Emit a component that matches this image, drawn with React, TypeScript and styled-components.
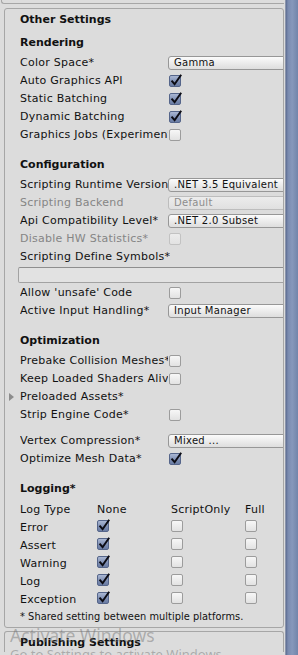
import React from "react";
import styled, { createGlobalStyle, css } from "styled-components";

const GlobalStyle = createGlobalStyle`
  html, body { margin: 0; padding: 0; background: #dcdcdc; overflow: hidden; }
  body { font-family: "DejaVu Sans", Verdana, sans-serif; font-size: 11px; color: #111; }
`;

const Page = styled.div`
  position: relative;
  display: flex;
  width: 298px;
  height: 655px;
  overflow: hidden;
  background: #dcdcdc;
`;

const Main = styled.div`
  flex: none;
  width: 285px;
  display: flex;
  flex-direction: column;
`;

const ScrollBar = styled.div`
  flex: 1;
  background: linear-gradient(to right, #b9bdc6 0, #5d6d92 1px, #7a8bb0 3px, #8798bb 55%, #7285aa 100%);
`;

const PrevBoxEdge = styled.div`
  flex: none;
  height: 3px;
  margin: 0 1px 0 1px;
  border-left: 1px solid #a6a6a6;
  border-bottom: 1px solid #a6a6a6;
  border-bottom-left-radius: 3px;
`;

const Box = styled.div<{ $open?: boolean }>`
  flex: none;
  margin: ${(p) => (p.$open ? "3px" : "4px")} 1px 0 4px;
  border: 1px solid #a6a6a6;
  border-radius: 3px;
  ${(p) =>
    p.$open &&
    css`
      border-bottom: none;
      border-bottom-left-radius: 0;
      border-bottom-right-radius: 0;
    `}
  padding: 2px 0 ${(p) => (p.$open ? "0" : "1px")} 0;
  overflow: hidden;
`;

const BoxTitle = styled.div`
  height: 18px;
  line-height: 18px;
  padding-left: 15px;
  font-weight: bold;
  white-space: nowrap;
`;

const Section = styled.div<{ $first?: boolean }>`
  margin-top: ${(p) => (p.$first ? "5px" : "12px")};
`;

const SectionTitle = styled.div`
  height: 18px;
  line-height: 18px;
  padding-left: 15px;
  margin-bottom: 2px;
  font-weight: bold;
  white-space: nowrap;
`;

const Row = styled.div<{ $gapAbove?: boolean }>`
  display: flex;
  align-items: center;
  height: 18px;
  padding-left: 15px;
  margin-top: ${(p) => (p.$gapAbove ? "8px" : "0")};
`;

const Label = styled.div<{ $disabled?: boolean; $wide?: boolean }>`
  flex: none;
  width: ${(p) => (p.$wide ? "auto" : "148px")};
  overflow: hidden;
  white-space: nowrap;
  line-height: 18px;
  letter-spacing: 0.25px;
  color: ${(p) => (p.$disabled ? "#858585" : "#111")};
`;

const Arrow = styled.span`
  flex: none;
  width: 0;
  height: 0;
  margin-left: -11px;
  margin-right: 6px;
  border-top: 4px solid transparent;
  border-bottom: 4px solid transparent;
  border-left: 5px solid #8c8c8c;
`;

const Popup = styled.div<{ $disabled?: boolean }>`
  flex: none;
  width: 140px;
  height: 14px;
  box-sizing: border-box;
  padding-left: 5px;
  border: 1px solid ${(p) => (p.$disabled ? "#bdbdbd" : "#979797")};
  border-radius: 3px;
  background: ${(p) =>
    p.$disabled
      ? "linear-gradient(#ececec, #e0e0e0)"
      : "linear-gradient(#fbfbfb, #e9e9e9 60%, #dedede)"};
  font-size: 10px;
  line-height: 12px;
  letter-spacing: 0.3px;
  white-space: nowrap;
  color: ${(p) => (p.$disabled ? "#8d8d8d" : "#111")};
`;

const TextFieldRow = styled.div`
  display: flex;
  height: 18px;
  padding-left: 13px;
`;

const TextField = styled.div`
  flex: none;
  width: 280px;
  height: 16px;
  box-sizing: border-box;
  margin-top: 1px;
  border: 1px solid #a2a2a2;
  border-top-color: #8e8e8e;
  border-radius: 2px;
  background: #e2e2e2;
`;

const CheckBox = styled.span<{ $checked?: boolean; $disabled?: boolean; $inset?: boolean }>`
  position: relative;
  flex: none;
  display: inline-block;
  width: 12px;
  height: 12px;
  box-sizing: border-box;
  margin-left: ${(p) => (p.$inset ? "1px" : "0")};
  border-radius: 2px;
  border: 1px solid ${(p) => (p.$checked ? "#55658a" : p.$disabled ? "#c2c2c2" : "#9c9c9c")};
  background: ${(p) =>
    p.$checked
      ? "linear-gradient(#aab7d3, #7c8db2 60%, #6a7ca3)"
      : p.$disabled
      ? "linear-gradient(#ececec, #e2e2e2)"
      : "linear-gradient(#f7f7f7, #e2e2e2)"};
`;

const CheckMark = styled.svg`
  position: absolute;
  left: 0;
  top: -2px;
  width: 12px;
  height: 12px;
  overflow: visible;
`;

const LogGrid = styled.div`
  display: grid;
  grid-template-columns: 77px 74px 74px 1fr;
  grid-auto-rows: 18px;
  align-items: center;
  padding-left: 15px;
  white-space: nowrap;
  letter-spacing: 0.25px;
`;

const Note = styled.div`
  height: 18px;
  line-height: 18px;
  padding-left: 15px;
  font-size: 9.8px;
  white-space: nowrap;
  letter-spacing: 0.05px;
`;

const Watermark = styled.div`
  position: absolute;
  left: 10px;
  top: 624px;
  font-family: "Noto Sans", "Open Sans", sans-serif;
  color: rgba(110, 110, 110, 0.45);
  pointer-events: none;
  white-space: nowrap;
`;

const WatermarkBig = styled.div`
  font-size: 17.5px;
  line-height: 22px;
`;

const WatermarkSmall = styled.div`
  font-size: 13px;
  line-height: 16px;
`;

function Check({ checked, disabled, inset }: { checked?: boolean; disabled?: boolean; inset?: boolean }) {
  return (
    <CheckBox $checked={checked} $disabled={disabled} $inset={inset}>
      {checked && (
        <CheckMark viewBox="0 0 12 12">
          <path d="M2.2 7.4 L4.6 10.2 L10.6 1.6" fill="none" stroke="#0c0c14" strokeWidth="2" strokeLinecap="square" />
        </CheckMark>
      )}
    </CheckBox>
  );
}

function CheckRow({ label, checked, disabled }: { label: string; checked?: boolean; disabled?: boolean }) {
  return (
    <Row>
      <Label $disabled={disabled}>{label}</Label>
      <Check checked={checked} disabled={disabled} inset />
    </Row>
  );
}

function PopupRow({ label, value, disabled, gapAbove }: { label: string; value: string; disabled?: boolean; gapAbove?: boolean }) {
  return (
    <Row $gapAbove={gapAbove}>
      <Label $disabled={disabled}>{label}</Label>
      <Popup $disabled={disabled}>{value}</Popup>
    </Row>
  );
}

const logTypes = ["Error", "Assert", "Warning", "Log", "Exception"];

export default function App() {
  return (
    <Page>
      <GlobalStyle />
      <Main>
        <PrevBoxEdge />
        <Box>
          <BoxTitle>Other Settings</BoxTitle>

          <Section $first>
            <SectionTitle>Rendering</SectionTitle>
            <PopupRow label="Color Space*" value="Gamma" />
            <CheckRow label="Auto Graphics API" checked />
            <CheckRow label="Static Batching" checked />
            <CheckRow label="Dynamic Batching" checked />
            <CheckRow label="Graphics Jobs (Experimental)*" />
          </Section>

          <Section>
            <SectionTitle>Configuration</SectionTitle>
            <PopupRow label="Scripting Runtime Version*" value=".NET 3.5 Equivalent" />
            <PopupRow label="Scripting Backend" value="Default" disabled />
            <PopupRow label="Api Compatibility Level*" value=".NET 2.0 Subset" />
            <CheckRow label="Disable HW Statistics*" disabled />
            <Row>
              <Label $wide>Scripting Define Symbols*</Label>
            </Row>
            <TextFieldRow>
              <TextField />
            </TextFieldRow>
            <CheckRow label="Allow 'unsafe' Code" />
            <PopupRow label="Active Input Handling*" value="Input Manager" />
          </Section>

          <Section>
            <SectionTitle>Optimization</SectionTitle>
            <CheckRow label="Prebake Collision Meshes*" />
            <CheckRow label="Keep Loaded Shaders Alive*" />
            <Row>
              <Arrow />
              <Label $wide>Preloaded Assets*</Label>
            </Row>
            <CheckRow label="Strip Engine Code*" />
            <PopupRow label="Vertex Compression*" value="Mixed ..." gapAbove />
            <CheckRow label="Optimize Mesh Data*" checked />
          </Section>

          <Section>
            <SectionTitle>Logging*</SectionTitle>
            <LogGrid>
              <span>Log Type</span>
              <span>None</span>
              <span>ScriptOnly</span>
              <span>Full</span>
              {logTypes.map((t) => (
                <React.Fragment key={t}>
                  <span>{t}</span>
                  <span><Check checked /></span>
                  <span><Check /></span>
                  <span><Check /></span>
                </React.Fragment>
              ))}
            </LogGrid>
            <Note>* Shared setting between multiple platforms.</Note>
          </Section>
        </Box>

        <Box $open>
          <BoxTitle>Publishing Settings</BoxTitle>
        </Box>
      </Main>
      <ScrollBar />
      <Watermark>
        <WatermarkBig>Activate Windows</WatermarkBig>
        <WatermarkSmall>Go to Settings to activate Windows.</WatermarkSmall>
      </Watermark>
    </Page>
  );
}
